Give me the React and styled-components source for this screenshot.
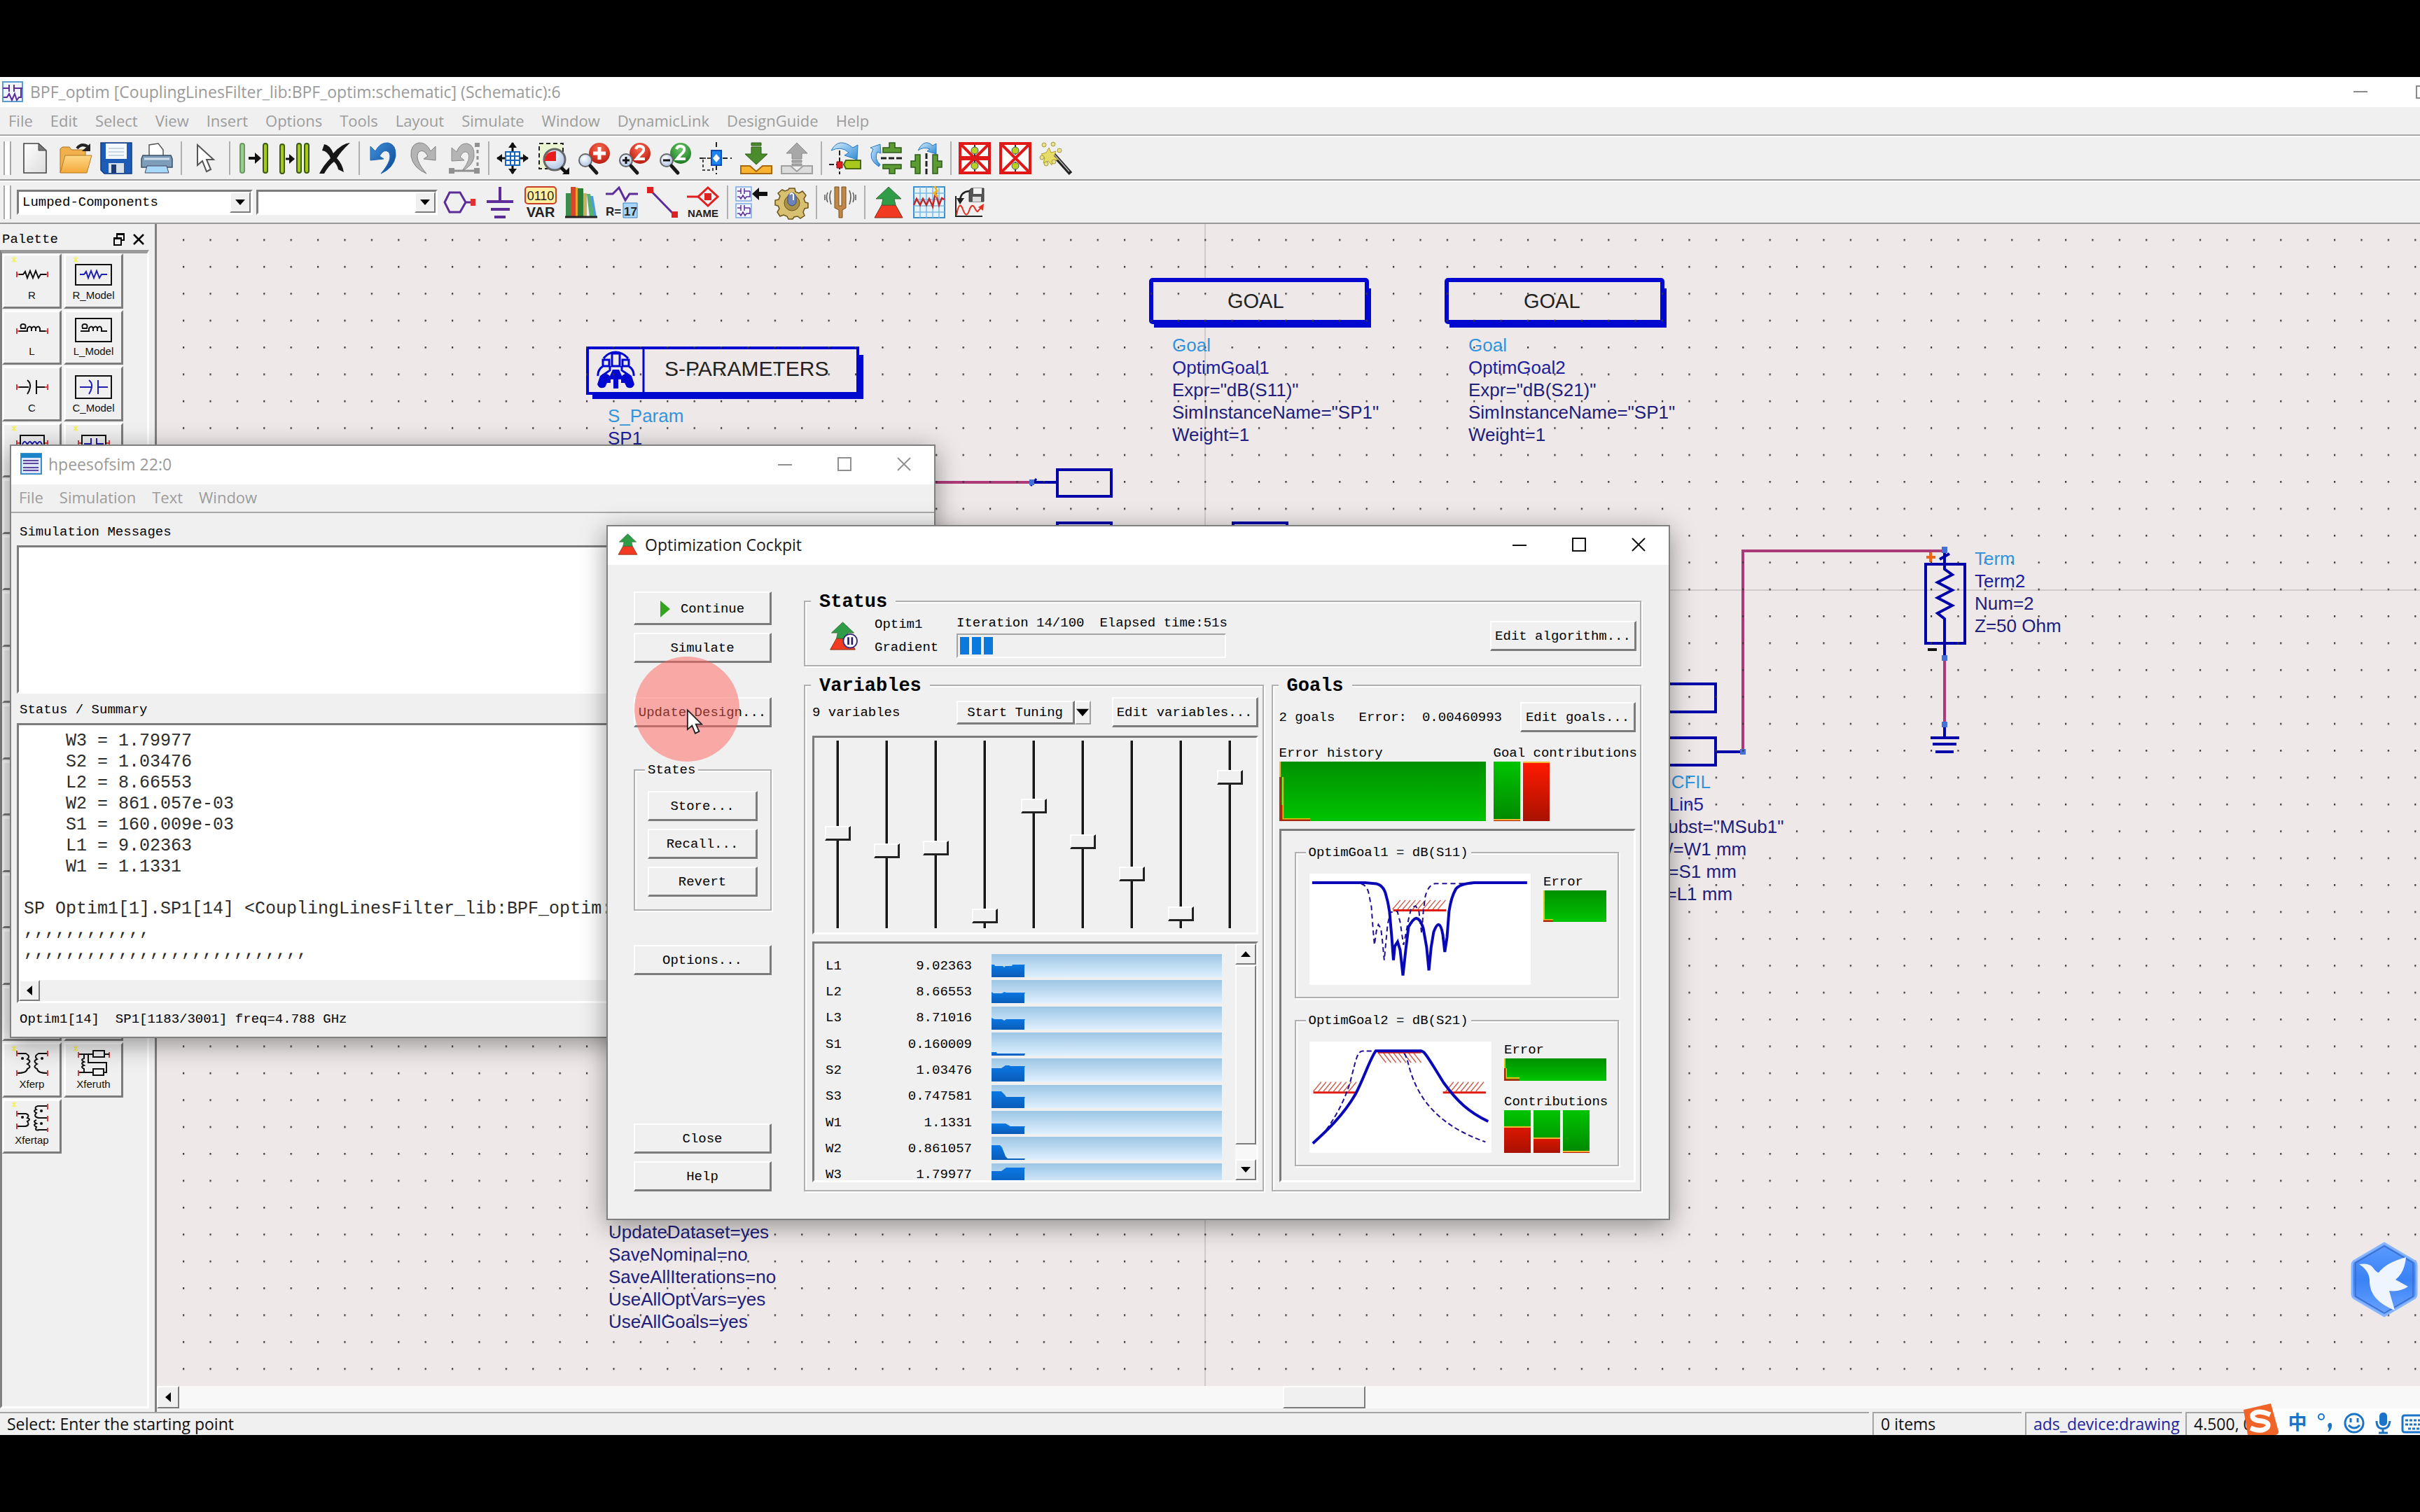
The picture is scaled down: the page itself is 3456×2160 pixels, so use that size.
import React from "react";
import styled, { createGlobalStyle, css } from "styled-components";

const ui = `"Open Sans", "Noto Sans", sans-serif`;
const mono = `"Liberation Mono", monospace`;
const arial = `"Liberation Sans", Arial, sans-serif`;
const face = "#f0f0f0";
const dark = "#7c7c7c";

const Global = createGlobalStyle`
  *, *::before, *::after { box-sizing: border-box; }
  body { margin: 0; background: #000; }
  button, select, input { font: inherit; color: inherit; margin: 0; }
`;

/* ---------- shell ---------- */
const Page = styled.div`
  height: 100vh;
  padding: 110px 0;
  display: flex;
  flex-direction: column;
  background: #000;
  overflow: hidden;
`;
const AppWindow = styled.div`
  position: relative;
  flex: 1;
  min-height: 0;
  display: flex;
  flex-direction: column;
  background: ${face};
  font-family: ${ui};
  font-size: 22px;
  overflow: hidden;
`;
const MainTitle = styled.header`
  height: 43px;
  display: flex;
  align-items: center;
  gap: 10px;
  padding: 0 0 2px 3px;
  background: #fff;
  color: #9a9a9a;
`;
const TitleText = styled.span`
  flex: 1;
  font-size: ${(p) => p.$size || 22}px;
  line-height: 32px;
  white-space: nowrap;
`;
const WinButtons = styled.div`
  display: flex;
  gap: ${(p) => p.$gap || 40}px;
  color: ${(p) => p.$color || "#8a8a8a"};
`;
const WinButton = styled.button`
  width: 44px;
  height: 40px;
  padding: 0;
  border: 0;
  background: none;
  display: grid;
  place-items: center;
`;
const MenuBar = styled.nav`
  height: 41px;
  display: flex;
  align-items: center;
  gap: ${(p) => p.$gap}px;
  padding: 0 0 ${(p) => p.$lift}px ${(p) => p.$pad}px;
  color: #9c9c9c;
  background: ${face};
  border-bottom: 2px solid #a8a8a8;
`;
const MenuItem = styled.button`
  padding: 0;
  border: 0;
  background: none;
  font-size: 22px;
  line-height: 30px;
`;
const Toolbar = styled.div`
  height: ${(p) => p.$h}px;
  display: flex;
  align-items: center;
  border-top: 2px solid #fff;
  border-bottom: 2px solid #9a9a9a;
`;
const Grip = styled.span`
  width: 11px;
  height: 48px;
  margin: 0 ${(p) => p.$after}px 0 5px;
  border: solid #a8a8a8;
  border-width: 0 2px;
  background: #fff;
`;
const ToolSep = styled.span`
  width: 11px;
  display: flex;
  justify-content: center;
  &::before {
    content: "";
    width: 2px;
    height: 48px;
    background: #b0b0b0;
  }
`;
const ToolButton = styled.button`
  width: 58px;
  height: 52px;
  padding: 0;
  border: 0;
  background: none;
  display: grid;
  place-items: center;
`;
const Combo = styled.div`
  display: flex;
  width: ${(p) => p.$w}px;
  height: 36px;
  margin-right: ${(p) => p.$after}px;
  background: #fff;
  border: 3px solid;
  border-color: #7c7c7c #fff #fff #7c7c7c;
`;
const ComboSelect = styled.select`
  flex: 1;
  min-width: 0;
  padding: 0 0 0 5px;
  border: 0;
  appearance: none;
  background: transparent;
  color: #000;
  font: 19px/28px ${mono};
`;
const bevel = css`
  background: ${face};
  border: 2px solid;
  border-color: #fff ${dark} ${dark} #fff;
`;
const ComboArrow = styled.span`
  ${bevel}
  width: 30px;
  display: grid;
  place-items: center;
`;
const Main = styled.main`
  flex: 1;
  min-height: 0;
  display: flex;
`;

/* ---------- palette ---------- */
const PaletteDock = styled.aside`
  width: 224px;
  display: flex;
  flex-direction: column;
  border-right: 3px solid #808080;
`;
const PaletteHead = styled.div`
  height: 37px;
  display: flex;
  align-items: center;
  gap: 12px;
  padding: 6px 15px 0 3px;
  font: 19px/24px ${mono};
`;
const PaletteName = styled.span`
  flex: 1;
`;
const TinyButton = styled.button`
  width: 16px;
  height: 20px;
  padding: 0;
  border: 0;
  background: none;
`;
const PaletteBody = styled.div`
  flex: 1;
  width: 213px;
  margin-bottom: 5px;
  border: solid;
  border-width: 5px 3px 3px;
  border-color: #9a9a9a #fff #fff #808080;
`;
const PaletteGrid = styled.div`
  display: grid;
  grid-template-columns: 85px 85px;
  grid-template-rows: repeat(16, 1fr);
  gap: 2px 3px;
  height: 1286px;
`;
const PaletteButton = styled.button`
  background: ${face};
  border: 3px solid;
  border-color: #fff ${dark} ${dark} #fff;
  padding: 0 0 7px;
  display: flex;
  flex-direction: column;
  align-items: center;
  justify-content: flex-end;
  font: 15px/18px ${arial};
  color: #111;
  overflow: hidden;
`;

/* ---------- canvas ---------- */
const CanvasColumn = styled.section`
  flex: 1;
  min-width: 0;
  display: flex;
  flex-direction: column;
`;
const Canvas = styled.div`
  position: relative;
  flex: 1;
  min-height: 0;
  overflow: hidden;
  background: #eee9e8;
`;
const CanvasDrawing = styled.svg`
  display: block;
  width: 100%;
  height: 100%;
`;
const Label = styled.div`
  position: absolute;
  left: ${(p) => p.$x - 224}px;
  top: ${(p) => p.$y - 320}px;
  font: ${(p) => p.$size || 26}px/32px ${arial};
  color: ${(p) => p.$color || "#20207c"};
  white-space: pre;
`;
const Kind = styled.div`
  color: #3394dc;
`;
const Name = styled.div`
  color: #20209c;
`;
const HScroll = styled.div`
  height: 37px;
  padding-bottom: 5px;
  display: flex;
  background: ${face};
`;
const HTrack = styled.div`
  flex: 1;
  display: grid;
  grid-template-columns: 1577fr 118px 1506fr;
  background: #f8f8f8;
`;
const HThumb = styled.span`
  ${bevel}
  grid-column: 2;
`;
const ScrollButton = styled.button`
  ${bevel}
  width: ${(p) => p.$w || 30}px;
  height: ${(p) => p.$h || 30}px;
  padding: 0;
  display: grid;
  place-items: center;
`;

/* ---------- status bar ---------- */
const StatusBar = styled.footer`
  height: 33px;
  display: flex;
  gap: 5px;
  background: ${face};
`;
const StatusCell = styled.div`
  ${(p) => (p.$w ? `width: ${p.$w}px;` : "flex: 1;")}
  border: solid #a4a4a4;
  border-width: 2px 0 0 ${(p) => (p.$w ? 2 : 0)}px;
  padding-left: 10px;
  line-height: 30px;
  white-space: nowrap;
  color: ${(p) => p.$color || "#111"};
  font-size: 23px;
`;
const ImeBar = styled.div`
  position: absolute;
  right: 0;
  bottom: 0;
  width: 254px;
  height: 46px;
`;
const Bird = styled.div`
  position: absolute;
  right: 3px;
  top: 1664px;
  width: 96px;
  height: 108px;
`;

/* ---------- windows ---------- */
const FloatingWindow = styled.section`
  position: absolute;
  left: ${(p) => p.$x}px;
  top: ${(p) => p.$y}px;
  width: ${(p) => p.$w}px;
  display: flex;
  flex-direction: column;
  background: ${face};
  border: 2px solid #808080;
  box-shadow: 0 8px 34px rgba(0, 0, 0, 0.4);
`;
const WindowTitle = styled.header`
  height: 55px;
  display: flex;
  align-items: center;
  gap: 9px;
  padding: 0 21px 4px 13px;
  background: #fff;
  color: ${(p) => p.$color};
`;
const SimBody = styled.div`
  display: flex;
  flex-direction: column;
  padding: 15px 8px 13px;
  font: 19px/24px ${mono};
  color: #000;
`;
const SimLabel = styled.div`
  padding: 0 4px 7px;
`;
const sunken = css`
  border: 3px solid;
  border-color: #7c7c7c #fff #fff #7c7c7c;
`;
const Messages = styled.div`
  ${sunken}
  height: 212px;
  margin-bottom: 11px;
  background: #fff;
`;
const Summary = styled.div`
  ${sunken}
  height: 400px;
  margin-bottom: 11px;
  background: #fff;
  display: flex;
  flex-direction: column;
  justify-content: space-between;
`;
const Log = styled.pre`
  margin: 0;
  padding: 8px 0 0 7px;
  font: 25px/30px ${mono};
  color: #2c2c2c;
  overflow: hidden;
`;
const LogScroll = styled.div`
  display: flex;
  gap: 3px;
  background: ${face};
`;
const SimStatus = styled.div`
  padding: 0 4px;
  white-space: pre;
`;

/* ---------- cockpit ---------- */
const CockpitBody = styled.div`
  display: grid;
  grid-template-columns: 197px 1fr;
  column-gap: 46px;
  padding: 36px 39px 39px 37px;
  font: 19px/24px ${mono};
  color: #000;
`;
const Side = styled.div`
  display: flex;
  flex-direction: column;
  gap: 49px;
  padding-top: 2px;
`;
const Stack = styled.div`
  display: flex;
  flex-direction: column;
  gap: 11px;
  ${(p) => p.$end && "margin-top: auto;"}
`;
const PushButton = styled.button`
  background: ${face};
  border: solid;
  border-width: 2px 3px 3px 2px;
  border-color: #fff ${dark} ${dark} #fff;
  height: ${(p) => p.$h || 43}px;
  ${(p) => p.$w && `width: ${p.$w}px;`}
  padding: 2px 0 0;
  display: flex;
  align-items: center;
  justify-content: center;
  gap: 15px;
  white-space: nowrap;
`;
const Group = styled.fieldset`
  min-width: 0;
  margin: 0;
  padding: ${(p) => p.$pad};
  border: 2px solid #b0b0b0;
  box-shadow: 2px 2px 0 #fff, inset 2px 2px 0 #fff;
`;
const GroupTitle = styled.legend`
  margin-left: ${(p) => p.$x}px;
  padding: ${(p) => (p.$big ? "3px 12px 0" : "0 4px")};
  background: ${face};
  font: ${(p) => (p.$big ? `bold 27px/29px ${mono}` : `19px/24px ${mono}`)};
`;
const Panes = styled.div`
  display: flex;
  flex-direction: column;
  gap: 11px;
`;
const StatusRow = styled.div`
  display: flex;
  align-items: center;
  height: 67px;
`;
const AlgoText = styled.div`
  width: 117px;
  margin-left: 25px;
  line-height: 33px;
`;
const ProgressBlock = styled.div`
  width: 385px;
  display: flex;
  flex-direction: column;
  gap: 3px;
`;
const ProgressText = styled.div`
  display: flex;
  gap: 22px;
  white-space: nowrap;
`;
const ProgressTrack = styled.div`
  height: 35px;
  display: flex;
  gap: 4px;
  padding: 3px;
  border: 2px solid;
  border-color: #a4a4a4 #fff #fff #a4a4a4;
`;
const Chunk = styled.span`
  width: 13px;
  background: #0a78dc;
`;
const Push = styled.div`
  margin-left: auto;
`;
const Columns = styled.div`
  display: grid;
  grid-template-columns: 656fr 528fr;
  gap: 11px;
`;
const Row = styled.div`
  display: flex;
  align-items: center;
  white-space: nowrap;
`;
const Grow = styled.span`
  flex: 1;
`;
const TuneSplit = styled.div`
  display: flex;
  width: 192px;
  margin-right: 30px;
`;
const TuneArrow = styled.button`
  width: 23px;
  padding: 0;
  background: ${face};
  border: 2px solid;
  border-color: #fff #a0a0a0 #a0a0a0 #fff;
  display: grid;
  place-items: center;
`;
const Sliders = styled.div`
  ${sunken}
  display: flex;
  justify-content: space-between;
  height: 284px;
  margin: 12px 0 10px;
  padding: 4px 19px 6px 15px;
`;
const Slider = styled.input`
  appearance: none;
  writing-mode: vertical-lr;
  direction: rtl;
  width: 37px;
  height: 268px;
  background: linear-gradient(90deg, #8a8a8a 0 1px, #161616 1px 4px, #fff 4px) center / 5px 100% no-repeat;
  &::-webkit-slider-runnable-track {
    width: 37px;
    background: transparent;
  }
  &::-webkit-slider-thumb {
    appearance: none;
    width: 37px;
    height: 21px;
    background: ${face};
    border: solid;
    border-width: 2px 3px 3px 2px;
    border-color: #fff #222 #222 #fff;
  }
`;
const VarPanel = styled.div`
  ${sunken}
  height: 344px;
  display: flex;
  align-items: flex-start;
  overflow: hidden;
`;
const VarTable = styled.table`
  height: 336px;
  margin-top: 13px;
  border-collapse: collapse;
  td, th {
    padding: 0;
    font-weight: normal;
  }
`;
const VarName = styled.th`
  width: 100px;
  text-align: left;
  && { padding-left: 16px; }
`;
const VarValue = styled.td`
  width: 125px;
  text-align: right;
`;
const VarChart = styled.td`
  width: 357px;
  && { padding-left: 28px; }
  line-height: 0;
`;
const VScroll = styled.div`
  width: 30px;
  height: 338px;
  margin-left: auto;
  display: flex;
  flex-direction: column;
  justify-content: space-between;
  background: #f8f8f8;
`;
const VThumb = styled.span`
  ${bevel}
  height: 256px;
  margin-bottom: 20px;
`;
const Caption = styled.div`
  white-space: nowrap;
  line-height: 24px;
`;
const GoalHead = styled(Row)`
  gap: 22px;
  margin-bottom: 18px;
`;
const GoalCount = styled.span`
  width: 92px;
`;
const GoalCharts = styled.div`
  display: grid;
  grid-template-columns: 295px 1fr;
  column-gap: 11px;
  margin-bottom: 11px;
`;
const Bars = styled.div`
  display: flex;
  gap: 4px;
`;
const GoalPanel = styled.div`
  ${sunken}
  height: 505px;
  display: flex;
  flex-direction: column;
  gap: 20px;
  padding: 19px 21px 0 19px;
`;
const GoalRow = styled.div`
  display: grid;
  grid-template-columns: 1fr ${(p) => p.$side}px;
  column-gap: 18px;
`;
const Plot = styled.svg`
  display: block;
  width: 100%;
  height: 159px;
  background: #fff;
`;
const Block = styled.svg`
  display: block;
`;
const GoalSide = styled.div`
  display: flex;
  flex-direction: column;
  justify-content: space-between;
`;
const ClickHalo = styled.div`
  position: absolute;
  left: 906px;
  top: 828px;
  width: 150px;
  height: 150px;
  border-radius: 50%;
  background: rgba(255, 98, 90, 0.5);
  pointer-events: none;
`;
const Pointer = styled.svg`
  position: absolute;
  left: 980px;
  top: 902px;
  pointer-events: none;
`;

/* ---------- icons ---------- */
const IconSvg = styled.svg`
  overflow: visible;
`;
const Glyph = ({ children, w = 46, h = 46, box }) => (
  <IconSvg width={w} height={h} viewBox={box || `0 0 ${w} ${h}`} fill="none" aria-hidden="true">
    {children}
  </IconSvg>
);
const Tri = ({ dir = "down", s = 14 }) => (
  <svg width={s} height={s} viewBox="0 0 14 14" aria-hidden="true">
    <path d={{ down: "M0 3h14L7 11z", up: "M0 11h14L7 3z", left: "M11 0v14L3 7z" }[dir]} fill="#000" />
  </svg>
);
const HiddenDefs = styled.svg`
  position: absolute;
`;
const Defs = () => (
  <HiddenDefs width="0" height="0" aria-hidden="true">
    <defs>
      <linearGradient id="gUp" x1="0" y1="0" x2="0" y2="1"><stop offset="0" stopColor="#009000" /><stop offset="1" stopColor="#00c400" /></linearGradient>
      <linearGradient id="gDown" x1="0" y1="0" x2="0" y2="1"><stop offset="0" stopColor="#00c400" /><stop offset="1" stopColor="#008800" /></linearGradient>
      <linearGradient id="rDown" x1="0" y1="0" x2="0" y2="1"><stop offset="0" stopColor="#ff1a00" /><stop offset="1" stopColor="#a81200" /></linearGradient>
      <linearGradient id="rDeep" x1="0" y1="0" x2="0" y2="1"><stop offset="0" stopColor="#dc1600" /><stop offset="1" stopColor="#a81200" /></linearGradient>
      <linearGradient id="sky" x1="0" y1="0" x2="0" y2="1"><stop offset="0" stopColor="#9cc6e4" /><stop offset="1" stopColor="#e0f0ff" /></linearGradient>
      <linearGradient id="bar" x1="0" y1="0" x2="0" y2="1"><stop offset="0" stopColor="#0a78e4" /><stop offset="1" stopColor="#0a5cb8" /></linearGradient>
      <linearGradient id="blueArrow" x1="0" y1="0" x2="1" y2="1"><stop offset="0" stopColor="#3f8fdc" /><stop offset="1" stopColor="#0c4690" /></linearGradient>
      <linearGradient id="lightArrow" x1="0" y1="0" x2="1" y2="1"><stop offset="0" stopColor="#d4ecfc" /><stop offset="1" stopColor="#2f8ad4" /></linearGradient>
      <linearGradient id="paper" x1="0" y1="0" x2="1" y2="1"><stop offset="0" stopColor="#fff" /><stop offset="1" stopColor="#dcdcdc" /></linearGradient>
      <linearGradient id="folder" x1="0" y1="0" x2="0" y2="1"><stop offset="0" stopColor="#ffd889" /><stop offset="1" stopColor="#f3a93a" /></linearGradient>
      <linearGradient id="bird" x1="0" y1="0" x2="0" y2="1"><stop offset="0" stopColor="#5d9bff" /><stop offset=".5" stopColor="#3a82f6" /><stop offset="1" stopColor="#6ba4ff" /></linearGradient>
      <radialGradient id="redBall" cx=".5" cy=".3" r=".7"><stop offset="0" stopColor="#ff6a50" /><stop offset="1" stopColor="#b81c10" /></radialGradient>
      <radialGradient id="greenBall" cx=".5" cy=".3" r=".7"><stop offset="0" stopColor="#6cc868" /><stop offset="1" stopColor="#1c7a24" /></radialGradient>
      <radialGradient id="lens" cx=".4" cy=".35" r=".7"><stop offset="0" stopColor="#fff" /><stop offset="1" stopColor="#a8c0e4" /></radialGradient>
    </defs>
  </HiddenDefs>
);

const Tree = ({ w = 46, h = 46, pause }) => (
  <Glyph w={w} h={h} box="0 0 46 46">
    <path d="M13 27h20l10 18H3z" fill="#f23a22" stroke="#7a2a10" />
    <path d="M23 1 41 18H31l2 9H13l2-9H5z" fill="#2f9c48" stroke="#3c6a3a" />
    {pause && (
      <g>
        <circle cx="35" cy="31" r="11" fill="#fff" stroke="#3a2a78" strokeWidth="2" />
        <path d="M32 25v12M38 25v12" stroke="#2a1a68" strokeWidth="3" />
      </g>
    )}
  </Glyph>
);
const Pin = ({ x, y = 0, pale }) => (
  <rect x={x} y={2 + y} width="6" height="42" rx="3" fill={pale ? "#9ccc94" : "#a8c81c"} stroke={pale ? "#6a9a62" : "#3a5a10"} strokeWidth="2" />
);
const Mag = ({ minus, plus, two, ball }) => (
  <Glyph>
    <circle cx="31" cy="16" r="15" fill={`url(#${ball})`} />
    {two ? (
      <path d="M25 10q2-5 7-4 5 1 4 6-1 3-5 6l-5 6h12" stroke="#fff" strokeWidth="4" />
    ) : (
      <path d="M31 7v18M22 16h18" stroke="#fff" strokeWidth="5" />
    )}
    <circle cx="11" cy="26" r="9" fill="url(#lens)" stroke="#666" strokeWidth="2" />
    {minus && <path d="M6 26h10" stroke="#111" strokeWidth="3" />}
    {plus && <path d="M6 26h10M11 21v10" stroke="#111" strokeWidth="3" />}
    <path d="m18 34 9 10" stroke="#1a1a1a" strokeWidth="5" strokeLinecap="round" />
  </Glyph>
);

const icons = {
  new: (
    <Glyph>
      <path d="M7 2h21l11 10v32H7z" fill="url(#paper)" stroke="#444" strokeWidth="1.6" />
      <path d="M28 2v10h11z" fill="#777" stroke="#444" />
    </Glyph>
  ),
  open: (
    <Glyph>
      <path d="M1 44V10l3-3h10l3 4h20v8" fill="#f0b04e" stroke="#a8701c" />
      <path d="M8 19h38l-7 25H1z" fill="url(#folder)" stroke="#b87a24" />
      <path d="M25 9q6-8 15-3" stroke="#222" strokeWidth="4" />
      <path d="M44 2v11H32z" fill="#222" />
    </Glyph>
  ),
  save: (
    <Glyph>
      <path d="M1 1h44v44H6l-5-5z" fill="#1c5cb8" stroke="#123c80" strokeWidth="1.5" />
      <path d="M8 2h30v22H8z" fill="#f4f8ff" />
      <path d="M12 9h22M12 14h22M12 19h22" stroke="#bcd" strokeWidth="1.5" />
      <path d="M12 30h22v14H12z" fill="#d8e0e8" />
      <path d="M16 32h7v12h-7z" fill="#1a3c78" />
    </Glyph>
  ),
  print: (
    <Glyph>
      <path d="M12 20V4l13-2 7 9v9z" fill="#fff" stroke="#555" strokeWidth="1.5" />
      <path d="M3 19h40l2 5v12H1V24z" fill="#7c9cb8" stroke="#3a5068" strokeWidth="1.5" />
      <path d="M5 24h36" stroke="#d0e0f0" strokeWidth="3" />
      <path d="M9 34h28l3 10H6z" fill="#a8d8f8" stroke="#446" />
    </Glyph>
  ),
  cursor: (
    <Glyph>
      <path d="M12 4v29l7-6 6 15 6-3-6-14h10z" fill="#fff" stroke="#555" strokeWidth="2" />
    </Glyph>
  ),
  wireA: (
    <Glyph>
      <Pin x={4} pale />
      <Pin x={37} />
      <path d="M16 23h12" stroke="#111" strokeWidth="4" />
      <path d="m25 15 9 8-9 8z" fill="#111" />
    </Glyph>
  ),
  wireB: (
    <Glyph>
      <Pin x={3} y={1} />
      <Pin x={27} />
      <Pin x={38} />
      <path d="M11 24h6" stroke="#111" strokeWidth="3" />
      <path d="m16 17 8 7-8 7z" fill="#111" />
    </Glyph>
  ),
  del: (
    <Glyph>
      <path d="M8 3q8 1 13 13Q33 2 45 1 32 13 26 23q8 8 10 20l-8-4q-1-6-6-11-8 6-14 17H1q6-12 16-22Q13 13 5 12z" fill="#161616" />
    </Glyph>
  ),
  undo: (
    <Glyph>
      <path d="M5 6v20l19-2-6-4q6-11 13-6 7 10-11 31Q38 37 41 20 42 3 30 1 19 0 12 13z" fill="url(#blueArrow)" stroke="#1c64b4" />
    </Glyph>
  ),
  redo: (
    <Glyph>
      <path d="M40 6v20l-17-2 6-4q-6-11-13-6-7 10 11 31Q8 37 5 20 4 3 16 1q11-1 17 12z" fill="#b4b4b4" stroke="#808080" />
    </Glyph>
  ),
  undo3: (
    <Glyph>
      <path d="M5 8v19l18-1-6-5q5-10 11-6 6 8-8 26 15-7 17-20Q38 4 27 2 17 1 12 14z" fill="#b4b4b4" stroke="#8a8a8a" />
      <path d="M42 2v36" stroke="#909090" strokeWidth="3" strokeDasharray="5 4" />
      <path d="M4 41h38" stroke="#909090" strokeWidth="3" />
      <path d="M1 37h8v8H1zM37 37h8v8h-8zM38 1h7v6h-7z" fill="#909090" />
    </Glyph>
  ),
  pan: (
    <Glyph>
      <path d="M23 1v44M1 23h44" stroke="#111" strokeWidth="3" />
      <path d="m23 0 6 8H17zM23 46l6-8H17zM0 23l8-6v12zM46 23l-8-6v12z" fill="#111" />
      <path d="M13 14h20v19H13z" fill="#fff" stroke="#1464c0" strokeWidth="2" />
      <path d="M13 20h20M13 26h20M20 14v19M26 14v19" stroke="#1464c0" strokeWidth="2" />
    </Glyph>
  ),
  zoomArea: (
    <Glyph>
      <path d="M3 2h34v36H3z" fill="#eaf4d0" stroke="#222" strokeWidth="2" strokeDasharray="6 4" />
      <circle cx="25" cy="25" r="15" fill="url(#lens)" stroke="#666" strokeWidth="3" />
      <path d="M11 27q0-14 16-14v14z" fill="#e81c1c" />
      <path d="m34 36 8 8" stroke="#111" strokeWidth="5" />
      <path d="M46 36v10H36z" fill="#111" />
    </Glyph>
  ),
  zoomIn: <Mag ball="redBall" />,
  zoomIn2: <Mag ball="redBall" two plus />,
  zoomOut2: <Mag ball="greenBall" two minus />,
  center: (
    <Glyph>
      <path d="M24 0v46M0 23h46" stroke="#222" strokeWidth="2" strokeDasharray="7 4" />
      <path d="M5 23h14v17H5z" stroke="#444" strokeWidth="2" strokeDasharray="4 3" />
      <path d="M17 12h14v21H17z" fill="#1c84f0" stroke="#0c4cb0" strokeWidth="2" />
      <path d="m24 17 5 6-5 6-5-6z" fill="#fff" />
    </Glyph>
  ),
  pushDown: (
    <Glyph>
      <path d="M16 1h14v4H16zM16 7h14v10h9L23 32 7 17h9z" fill="#4a8c2c" stroke="#2c5c18" />
      <path d="M1 34h13l9 8 9-8h13v11H1z" fill="#f8b430" stroke="#a86a10" strokeWidth="2" />
    </Glyph>
  ),
  popUp: (
    <Glyph>
      <path d="M23 1 38 16h-8v8H16v-8H8zM16 26h14v3H16zM16 31h14v3H16z" fill="#a8a8a8" stroke="#8a8a8a" />
      <path d="M1 34h13l9 8 9-8h13v11H1z" fill="#dcdcdc" stroke="#a0a0a0" strokeWidth="2" />
    </Glyph>
  ),
  rotate: (
    <Glyph>
      <path d="M3 12Q14-8 34 8l7-4-1 21-18-6 6-4Q18 5 3 12z" fill="url(#lightArrow)" stroke="#2a78c0" />
      <path d="M15 12v34M0 32h22" stroke="#222" strokeWidth="2" strokeDasharray="7 3" />
      <path d="M11 28h8v9h-8z" fill="#e02020" stroke="#801010" />
      <path d="M24 26h21v12H24l-3-6z" fill="#a8c81c" stroke="#4a6a10" strokeWidth="2" />
    </Glyph>
  ),
  mirrorX: (
    <Glyph>
      <path d="M13 35Q-4 24 5 10L1 8l14-5 1 13-5-2q-5 10 4 18z" fill="url(#lightArrow)" stroke="#2a78c0" />
      <path d="M16 23h30" stroke="#222" strokeWidth="3" strokeDasharray="8 3" />
      <path d="M28 1h8v7h9v7H19V8h9zM28 45h8v-7h9v-6H19v6h9z" fill="#5c9a34" stroke="#2c5c18" strokeWidth="1.5" />
    </Glyph>
  ),
  mirrorY: (
    <Glyph>
      <path d="M11 12Q20-6 32 5l5-3v15l-13-4 4-3q-9-4-17 2z" fill="url(#lightArrow)" stroke="#2a78c0" />
      <path d="M23 16v30" stroke="#222" strokeWidth="3" strokeDasharray="8 3" />
      <path d="M1 27h6v-9h7v27H7v-9H1zM45 27h-6v-9h-7v27h7v-9h6z" fill="#5c9a34" stroke="#2c5c18" strokeWidth="1.5" />
    </Glyph>
  ),
  deact: (
    <Glyph>
      <path d="M2 2h42v42H2z" fill="#fff" stroke="#e01818" strokeWidth="4" />
      <path d="m4 4 38 38M42 4 4 42" stroke="#e01818" strokeWidth="4" />
      <path d="M23 4v38" stroke="#333" strokeWidth="2" />
      <circle cx="23" cy="12" r="5" fill="#b8d020" stroke="#456" /><circle cx="23" cy="34" r="5" fill="#b8d020" stroke="#456" />
      <path d="M3 23h40" stroke="#e01818" strokeWidth="6" />
    </Glyph>
  ),
  short: (
    <Glyph>
      <path d="M2 2h42v42H2z" fill="#fff" stroke="#e01818" strokeWidth="4" />
      <path d="m4 4 38 38M42 4 4 42" stroke="#e01818" strokeWidth="4" />
      <path d="M23 4v14M23 28v14" stroke="#333" strokeWidth="2" />
      <circle cx="23" cy="12" r="5" fill="#b8d020" stroke="#456" /><circle cx="23" cy="34" r="5" fill="#b8d020" stroke="#456" />
    </Glyph>
  ),
  wand: (
    <Glyph>
      <path d="m19 17 25 28" stroke="#222" strokeWidth="6" />
      <path d="m20 17 22 25" stroke="#bbb" strokeWidth="1.5" />
      <path d="m13 8 3 7 7-2-3 7 6 5-8 1-1 7-5-6-7 3 2-8-5-5 7-2z" fill="#e8dc68" stroke="#b0a030" />
      <g fill="#e8e08c" stroke="#a89c38"><circle cx="6" cy="4" r="3" /><circle cx="19" cy="3" r="3" /><circle cx="28" cy="12" r="3" /><circle cx="3" cy="22" r="3" /><circle cx="9" cy="31" r="3" /><circle cx="20" cy="28" r="3" /></g>
    </Glyph>
  ),
  port: (
    <Glyph>
      <path d="m9 9 15 0 8 14-8 14H9L2 23z" stroke="#5c2c98" strokeWidth="3" />
      <path d="M32 23h7" stroke="#5c2c98" strokeWidth="3" />
      <path d="M39 18h7v10h-7z" fill="#e03030" />
    </Glyph>
  ),
  gnd: (
    <Glyph>
      <path d="M23 1v20M4 22h38M10 33h27M15 44h16" stroke="#5c2c98" strokeWidth="4" />
    </Glyph>
  ),
  vars: (
    <Glyph>
      <rect x="1" y="1" width="44" height="24" rx="4" fill="#fff0a0" stroke="#c83c28" strokeWidth="2" />
      <text x="23" y="20" textAnchor="middle" fontFamily="Liberation Sans" fontSize="18" fill="#222">0110</text>
      <text x="23" y="44" textAnchor="middle" fontFamily="Liberation Sans" fontWeight="bold" fontSize="20" fill="#222">VAR</text>
    </Glyph>
  ),
  books: (
    <Glyph>
      <path d="M1 10h7v34H1z" fill="#3c8c50" /><path d="M8 1h7v43H8z" fill="#d84828" /><path d="M15 2h3v42h-3z" fill="#f0a030" />
      <path d="M18 3h8v41h-8z" fill="#2c7c34" /><path d="M26 10h5v34h-5z" fill="#c8b060" /><path d="m31 11 5 0 7 33h-8z" fill="#58b070" /><path d="m36 14 4 0 5 30h-3z" fill="#4c9ce0" />
      <path d="M0 44h46" stroke="#222" strokeWidth="3" />
    </Glyph>
  ),
  r17: (
    <Glyph>
      <path d="M0 11h10l9-9 9 18 6-9h12" stroke="#5c2c98" strokeWidth="3" />
      <path d="M25 24h20v21H25z" fill="#a8d4f8" stroke="#3c80c0" />
      <text x="0" y="42" fontFamily="Liberation Sans" fontWeight="bold" fontSize="17" fill="#222">R=</text>
      <text x="26" y="42" fontFamily="Liberation Sans" fontWeight="bold" fontSize="17" fill="#222">17</text>
    </Glyph>
  ),
  wire: (
    <Glyph>
      <path d="m6 6 34 35" stroke="#5c2c98" strokeWidth="3" />
      <path d="M1 1h9v9H1zM36 36h9v9h-9z" fill="#e02020" />
    </Glyph>
  ),
  name: (
    <Glyph>
      <path d="M0 15h16" stroke="#e02020" strokeWidth="3" />
      <path d="m30 2 14 13-14 13-14-13z" stroke="#e02020" strokeWidth="3" /><path d="M25 10h10v10H25z" fill="#e02020" />
      <text x="23" y="44" textAnchor="middle" fontFamily="Liberation Sans" fontWeight="bold" fontSize="15" fill="#222">NAME</text>
    </Glyph>
  ),
  hier: (
    <Glyph>
      {[1, 25].map((y) => (
        <g key={y}>
          <path d={`M1 ${y}h22v20H1z`} fill="#f0f4ff" stroke="#7ca8e0" strokeWidth="1.5" />
          <path d={`M3 ${y + 6}h5v-4v8M13 ${y + 2}v8m0-4h8M3 ${y + 14}h3l2 3 3-5 3 5 2-3h5v-8`} stroke="#5c2c98" strokeWidth="1.5" />
        </g>
      ))}
      <path d="M24 11 34 2v6h12v6H34v6z" fill="#111" />
    </Glyph>
  ),
  gear: (
    <Glyph>
      <path d="m19 3 8 0 1 5 5 2 5-3 5 6-3 5 2 5 4 1v7l-5 1-2 5 2 5-6 4-4-3-5 1-2 3h-6l-2-4-5-2-5 2-4-6 3-5-2-4-4-1v-7l5-1 2-5-3-4 6-5 4 2 5-2z" fill="#d8c070" stroke="#6a5418" strokeWidth="1.5" />
      <circle cx="23" cy="24" r="11" fill="#a89048" stroke="#6a5418" />
      <path d="M17 14q6-10 12 0v10q-6 8-12 0z" fill="#6c84b8" stroke="#3a4a78" /><path d="M20 12q3-4 5 0v8" stroke="#fff" strokeWidth="2" />
    </Glyph>
  ),
  fork: (
    <Glyph>
      <path d="M15 1h6v27h4V1h6v30l-5 3v11h-5V34l-6-3z" fill="#c08848" stroke="#7a4c18" />
      <path d="M10 6q-4 9 0 20M5 9q-3 7 0 14M1 12v8M36 6q4 9 0 20M41 9q3 7 0 14M45 12v8" stroke="#555" strokeWidth="1.5" />
    </Glyph>
  ),
  tree: <Tree />,
  chart: (
    <Glyph>
      <path d="M1 1h44v44H1z" fill="#e4f2fc" stroke="#3c90cc" strokeWidth="2" />
      <path d="M10 1v44M19 1v44M28 1v44M37 1v44M1 10h44M1 19h44M1 28h44M1 37h44" stroke="#7cb8e0" strokeWidth="1.5" />
      <path d="m1 27 4-9 5 9 4-9 5 9 4-9 5 11 4-20 5 18 4-10 4 2" stroke="#c02828" strokeWidth="2.5" />
      <path d="m31 0 3 7-4 3 5 5" stroke="#f0b020" strokeWidth="3" />
    </Glyph>
  ),
  saveGraph: (
    <Glyph>
      <path d="M25 3h18v19H22V6z" fill="#555" stroke="#333" /><path d="M28 3h12v8H28z" fill="#f4f4f4" /><path d="M27 15h12v7H27z" fill="#ddd" />
      <path d="M22 7Q10 8 9 20" stroke="#222" strokeWidth="2.5" /><path d="M4 17h11l-6 9z" fill="#222" />
      <path d="M3 14v29h38" stroke="#222" strokeWidth="2" />
      <path d="M4 41q4-22 9-8t9 2 8-4 5 4l6-6" stroke="#e03020" strokeWidth="2" /><path d="m43 25-1 10-7-5z" fill="#e03020" />
    </Glyph>
  ),
};

const toolbarOne = ["new", "open", "save", "print", "|", "cursor", "|", "wireA", "wireB", "del", "|", "undo", "redo", "undo3", "|", "pan", "zoomArea", "zoomIn", "zoomIn2", "zoomOut2", "center", "pushDown", "popUp", "|", "rotate", "mirrorX", "mirrorY", "|", "deact", "short", "wand"];
const toolbarTwo = ["port", "gnd", "vars", "books", "r17", "wire", "name", "|", "hier", "gear", "|", "fork", "|", "tree", "chart", "saveGraph"];

const Tools = ({ items }) =>
  items.map((id, i) =>
    id === "|" ? <ToolSep key={i} /> : <ToolButton key={i} type="button" aria-label={id}>{icons[id]}</ToolButton>
  );

/* palette drawings, 60 x 46 */
const Star = () => <path d="m1 1 6 6M7 1 1 7M4 0v8" stroke="#f4f060" strokeWidth="1.5" />;
const Ends = ({ y }) => <path d={`M8 ${y - 4}v8M52 ${y - 4}v8M8 ${y}h5M47 ${y}h5`} stroke="#d04040" strokeWidth="2" />;
const zig = "h6l3-4 3 9 4-10 4 10 4-10 4 10 3-5h8";
const coil = "M11 26h12v-4M14 22q-2-6 3-6t3 6zM23 26v-4q4-5 6 0v4m0-4q4-5 6 0v4m0-4q4-5 6 0v4h8";
const drawings = {
  R: <g><Star /><Ends y={25} /><path d={`M11 25${zig}`} stroke="#111" strokeWidth="2" /></g>,
  R_Model: <g><Star /><path d="M4 11h51v29H4z" stroke="#111" strokeWidth="2" /><path d={`M10 25${zig}`} stroke="#2020b0" strokeWidth="2" /></g>,
  L: <g><Ends y={26} /><path d={coil} stroke="#111" strokeWidth="2" /></g>,
  L_Model: <g><path d="M4 8h51v33H4z" stroke="#111" strokeWidth="2" /><path d={coil} stroke="#111" strokeWidth="2" /></g>,
  C: <g><Ends y={25} /><path d="M11 25h14M36 15v20M36 25h12M23 15q5 4 4 10t-4 10" stroke="#111" strokeWidth="2" /></g>,
  C_Model: <g><path d="M4 9h51v32H4z" stroke="#111" strokeWidth="2" /><path d="M10 25h16M36 15v20M36 25h14M23 15q5 4 4 10t-4 10" stroke="#2020b0" strokeWidth="2" /></g>,
  LR: <g><Star /><Ends y={25} /><path d="M13 40V14h34v26" stroke="#111" strokeWidth="2" /><path d="M16 27q3-8 7 0 4-8 7 0 4-8 7 0 4-8 7 0" stroke="#2020b0" strokeWidth="2" /></g>,
  CR: <g><Star /><Ends y={25} /><path d="M13 40V14h34v26" stroke="#111" strokeWidth="2" /><path d="M26 18v16M34 18v16M16 26h10M34 26h10" stroke="#2020b0" strokeWidth="2" /></g>,
  Xferp: <g><Star /><path d="M8 7v8M8 35v8M52 7v8M52 35v8" stroke="#d04040" strokeWidth="2" /><path d="M9 11h12q7 4 2 8 7 3 0 7 7 4 0 7-1 6-14 6M51 11H39q-7 4-2 8-7 3 0 7-7 4 0 7 1 6 14 6" stroke="#111" strokeWidth="2" /><path d="M16 18h.1M44 18h.1" stroke="#111" strokeWidth="4" strokeLinecap="round" /></g>,
  Xferuth: <g><Star /><path d="M8 9v8M8 35v8M52 9v8" stroke="#d04040" strokeWidth="2" /><path d="M9 12h19M29 7h16v9H29zM45 12h7M16 13v5q-6 2 0 5-6 2 0 5-6 2 0 5v5M22 13v11h26v14H44M29 33h15v9H29zM9 38h20" stroke="#111" strokeWidth="2" /></g>,
  Xfertap: <g><Star /><path d="M8 13v8M8 31v8M52 3v8M52 20v8M52 37v6" stroke="#d04040" strokeWidth="2" /><path d="M9 17h12q6 2 2 6 6 2 0 5 4 6-3 7H9M51 6H38q-6 2-2 5-6 2 0 5-5 5 3 7h12M36 26q-6 2 0 5-6 2 0 5-3 6 4 4h11" stroke="#111" strokeWidth="2" /><path d="M16 22h.1M43 13h.1M43 31h.1" stroke="#111" strokeWidth="4" strokeLinecap="round" /></g>,
};
const paletteItems = [
  ["R", "R"], ["R_Model", "R_Model"], ["L", "L"], ["L_Model", "L_Model"], ["C", "C"], ["C_Model", "C_Model"], ["LR", ""], ["CR", ""],
  ...Array.from({ length: 20 }, () => [null, ""]),
  ["Xferp", "Xferp"], ["Xferuth", "Xferuth"], ["Xfertap", "Xfertap"],
];

/* ---------- schematic ---------- */
const zigzag = "M2777 785V813l11 8-21 11 21 11-21 11 21 11-21 11 10 8V940";
const GoalBox = ({ x }) => (
  <g>
    <path d={`M${x + 6} 458h306v10h-306zM${x + 306} 412h10v56h-10z`} fill="#0008d0" />
    <rect x={x + 2} y="400" width="308" height="60" rx="2" fill="#eee9e8" stroke="#0008d0" strokeWidth="6" />
  </g>
);
const Schematic = () => (
  <CanvasDrawing aria-hidden="true">
    <defs>
      <pattern id="dots" width="38.4" height="38.4" patternUnits="userSpaceOnUse" x="261" y="341.5">
        <rect width="2.2" height="2.6" fill="#3c3838" />
      </pattern>
    </defs>
    <g transform="translate(-224 -320)" fill="none">
      <path d="M224 843h3300M1721 320v1700" stroke="#d0cccb" strokeWidth="2" />
      <GoalBox x={1642} />
      <GoalBox x={2064} />
      <path d="M1225 507h8v63H846v-8h379z" fill="#0008d0" />
      <path d="M839 497h386v65H839z" fill="#eee9e8" stroke="#0008d0" strokeWidth="4" />
      <path d="M919 497v65" stroke="#0008d0" strokeWidth="3" />
      <path d="M874 505h11v18h-11zM861 514h9v9h-9zM889 514h9v9h-9zM862 512q7-9 17-9t18 9M861 523q-8 6-7 14M898 523q8 6 7 14M871 523v6l-10 7M888 523v6l10 7" stroke="#0008d0" strokeWidth="3" />
      <path d="M857 537q7-7 14 0l4-9h9l4 9q7-7 14 0l4 12q-3 8-11 4l-3-6h-5v-5h-4v13h-7v-13h-4v5h-5l-3 6q-8 4-11-4z" fill="#0008d0" />
      <path d="M1336 689h138M2489 1074V787h288M2777 940v95" stroke="#ad3a78" strokeWidth="4" />
      <g stroke="#0004a8" strokeWidth="4">
        <path d="M1474 689h34M1510 671h77v38h-77zM1510 747h77v30h-77zM1761 747h77v30h-77zM2300 977h150v40h-150zM2300 1054h150v39h-150zM2450 1074h39" />
        <path d="m1472 694 8-10" strokeWidth="3" />
        <path d="M2750 806h56v113h-56z" />
        <path d={zigzag} />
        <path d="m2770 799 14-8M2777 1035v18M2757 1054h41M2760 1063h34M2764 1074h26" />
      </g>
      <path d="M2751 796h13M2757 789v14" stroke="#f06414" strokeWidth="4" />
      <path d="M2753 928h13" stroke="#111" strokeWidth="4" />
      <path d="M2773 781h8v9h-8zM2773 936h8v8h-8zM2773 1031h8v8h-8zM2485 1070h8v8h-8zM1470 685h7v8h-7z" fill="#4470d8" />
      <rect x="256" y="334" width="3300" height="1646" fill="url(#dots)" />
    </g>
  </CanvasDrawing>
);
const labels = [
  { x: 1674, y: 477, kind: "Goal", name: "OptimGoal1", params: ['Expr="dB(S11)"', 'SimInstanceName="SP1"', "Weight=1"] },
  { x: 2097, y: 477, kind: "Goal", name: "OptimGoal2", params: ['Expr="dB(S21)"', 'SimInstanceName="SP1"', "Weight=1"] },
  { x: 868, y: 578, kind: "S_Param", name: "SP1", params: [] },
  { x: 2820, y: 782, kind: "Term", name: "Term2", params: ["Num=2", "Z=50 Ohm"] },
  { x: 2365, y: 1101, kind: "MCFIL", name: "CLin5", params: ['Subst="MSub1"', "W=W1 mm", "S=S1 mm", "L=L1 mm"] },
  { x: 869, y: 1744, params: ["UpdateDataset=yes", "SaveNominal=no", "SaveAllIterations=no", "UseAllOptVars=yes", "UseAllGoals=yes"] },
];

/* ---------- cockpit data ---------- */
const variables = [
  { name: "L1", value: "9.02363", slide: 125, shape: "0 15,4 15,5 17,16 17,18 19,20 17,29 17,30 15,48 15,47 16,47 33,0 33" },
  { name: "L2", value: "8.66553", slide: 100, shape: "0 17,3 19,15 19,18 17,21 18,48 18,47 20,47 33,0 33" },
  { name: "L3", value: "8.71016", slide: 104, shape: "0 16,4 18,15 18,18 20,21 18,48 18,47 20,47 33,0 33" },
  { name: "S1", value: "0.160009", slide: 7, shape: "0 28,7 28,8 30,48 30,47 33,0 33" },
  { name: "S2", value: "1.03476", slide: 164, shape: "0 14,14 14,20 10,25 10,27 11,48 11,47 13,47 33,0 33" },
  { name: "S3", value: "0.747581", slide: 113, shape: "0 9,14 9,19 14,21 17,48 17,47 19,47 33,0 33" },
  { name: "W1", value: "1.1331", slide: 67, shape: "0 18,20 18,27 22,48 22,47 24,47 33,0 33" },
  { name: "W2", value: "0.861057", slide: 10, shape: "0 12,12 12,15 15,20 28,23 31,48 31,47 33,0 33" },
  { name: "W3", value: "1.79977", slide: 205, shape: "0 11,14 11,21 6,48 6,47 8,47 33,0 33" },
];

const ErrorBox = ({ h, path, edge }) => (
  <Block width="100%" height={h}>
    <rect width="100%" height="100%" fill="url(#gUp)" />
    <path d={path} stroke="#e8c010" strokeWidth="2" fill="none" />
    <path d={edge} stroke="#a82810" strokeWidth="3" fill="none" />
  </Block>
);
const Contribution = ({ h, red, fill = "rDeep" }) => (
  <Block width="38" height={h}>
    <rect width="38" height={h} fill="url(#gDown)" />
    <rect y={h - red} width="38" height={red} fill={`url(#${fill})`} />
    <rect y={h - red - 1} width="38" height="2" fill="#f0b830" />
  </Block>
);
const hatch = (x0, x1, yTop, yBot, back) => {
  let d = "";
  for (let x = x0; x + 30 <= x1 + 4; x += 18) d += back ? `M${x} ${yTop}L${x + 28} ${yBot}` : `M${x} ${yBot}L${x + 28} ${yTop}`;
  return d;
};
const thin = { vectorEffect: "non-scaling-stroke", fill: "none" };

const CloseSet = ({ gap, color }) => (
  <WinButtons $gap={gap} $color={color}>
    <WinButton type="button" aria-label="Minimize"><svg width="20" height="20"><path d="M0 11h20" stroke="currentColor" strokeWidth="2" /></svg></WinButton>
    <WinButton type="button" aria-label="Maximize"><svg width="20" height="20"><path d="M1 1h18v18H1z" stroke="currentColor" strokeWidth="2" fill="none" /></svg></WinButton>
    <WinButton type="button" aria-label="Close window"><svg width="20" height="20"><path d="m1 1 18 18M19 1 1 19" stroke="currentColor" strokeWidth="2" /></svg></WinButton>
  </WinButtons>
);

const SimWindow = () => (
  <FloatingWindow $x={14} $y={525} $w={1322}>
    <WindowTitle $color="#9a9a9a">
      <Glyph w={31} h={31}>
        <path d="M1 1h29v29H1z" fill="#dfe8f8" stroke="#3c8cc8" strokeWidth="2" />
        <path d="M1 1h29v6H1z" fill="#1c84c8" />
        <path d="M4 11h22M4 15h22M4 21h22M4 25h22" stroke="#5c48a0" strokeWidth="2" />
      </Glyph>
      <TitleText $size={23}>hpeesofsim 22:0</TitleText>
      <CloseSet gap={41} color="#909090" />
    </WindowTitle>
    <MenuBar $gap={23} $pad={11} $lift={3}>
      {["File", "Simulation", "Text", "Window"].map((m) => <MenuItem key={m} type="button">{m}</MenuItem>)}
    </MenuBar>
    <SimBody>
      <SimLabel>Simulation Messages</SimLabel>
      <Messages />
      <SimLabel>Status / Summary</SimLabel>
      <Summary>
        <Log>{`    W3 = 1.79977
    S2 = 1.03476
    L2 = 8.66553
    W2 = 861.057e-03
    S1 = 160.009e-03
    L1 = 9.02363
    W1 = 1.1331

SP Optim1[1].SP1[14] <CouplingLinesFilter_lib:BPF_optim:
,,,,,,,,,,,,
,,,,,,,,,,,,,,,,,,,,,,,,,,,`}</Log>
        <LogScroll>
          <ScrollButton type="button" aria-label="Scroll left"><Tri dir="left" /></ScrollButton>
        </LogScroll>
      </Summary>
      <SimStatus>{"Optim1[14]  SP1[1183/3001] freq=4.788 GHz"}</SimStatus>
    </SimBody>
  </FloatingWindow>
);

const Cockpit = () => (
  <FloatingWindow $x={866} $y={640} $w={1519}>
    <WindowTitle $color="#1a1a1a">
      <Tree w={31} h={31} />
      <TitleText $size={23}>Optimization Cockpit</TitleText>
      <CloseSet gap={41} color="#111" />
    </WindowTitle>
    <CockpitBody>
      <Side>
        <Stack>
          <PushButton type="button" $h={48}>
            <svg width="14" height="24" aria-hidden="true"><path d="M0 0 14 12 0 24z" fill="#34a420" /></svg>
            Continue
          </PushButton>
          <PushButton type="button">Simulate</PushButton>
        </Stack>
        <PushButton type="button">Update Design...</PushButton>
        <Group $pad="18px 18px">
          <GroupTitle $x={-4}>States</GroupTitle>
          <Stack>
            <PushButton type="button">Store...</PushButton>
            <PushButton type="button">Recall...</PushButton>
            <PushButton type="button">Revert</PushButton>
          </Stack>
        </Group>
        <PushButton type="button">Options...</PushButton>
        <Stack $end>
          <PushButton type="button">Close</PushButton>
          <PushButton type="button">Help</PushButton>
        </Stack>
      </Side>
      <Panes>
        <Group $pad="0 5px 8px 33px">
          <GroupTitle $big $x={-25}>Status</GroupTitle>
          <StatusRow>
            <Tree w={41} h={41} pause />
            <AlgoText>Optim1<br />Gradient</AlgoText>
            <ProgressBlock>
              <ProgressText><span>Iteration 14/100</span><span>Elapsed time:51s</span></ProgressText>
              <ProgressTrack role="progressbar" aria-label="Iterations" aria-valuenow={14} aria-valuemax={100}>
                <Chunk /><Chunk /><Chunk />
              </ProgressTrack>
            </ProgressBlock>
            <Push><PushButton type="button" $w={209}>Edit algorithm...</PushButton></Push>
          </StatusRow>
        </Group>
        <Columns>
          <Group $pad="1px 6px 11px 10px">
            <GroupTitle $big $x={-2}>Variables</GroupTitle>
            <Row>
              <Grow>9 variables</Grow>
              <TuneSplit>
                <PushButton type="button" $w={169} $h={34}>Start Tuning</PushButton>
                <TuneArrow type="button" aria-label="Tuning options"><Tri s={18} /></TuneArrow>
              </TuneSplit>
              <PushButton type="button" $w={209}>Edit variables...</PushButton>
            </Row>
            <Sliders>
              {variables.map((v) => (
                <Slider key={v.name} type="range" min="0" max="247" defaultValue={v.slide} aria-label={v.name} />
              ))}
            </Sliders>
            <VarPanel>
              <VarTable>
                <tbody>
                  {variables.map((v) => (
                    <tr key={v.name}>
                      <VarName scope="row">{v.name}</VarName>
                      <VarValue>{v.value}</VarValue>
                      <VarChart>
                        <Block width="329" height="33">
                          <rect width="329" height="33" fill="url(#sky)" />
                          <polygon points={v.shape} fill="url(#bar)" />
                        </Block>
                      </VarChart>
                    </tr>
                  ))}
                </tbody>
              </VarTable>
              <VScroll>
                <ScrollButton type="button" aria-label="Scroll up"><Tri dir="up" /></ScrollButton>
                <VThumb />
                <ScrollButton type="button" aria-label="Scroll down"><Tri /></ScrollButton>
              </VScroll>
            </VarPanel>
          </Group>
          <Group $pad="8px 6px 10px 9px">
            <GroupTitle $big $x={-1}>Goals</GroupTitle>
            <GoalHead>
              <GoalCount>2 goals</GoalCount>
              <span>Error:</span>
              <span>0.00460993</span>
              <Push><PushButton type="button" $w={165}>Edit goals...</PushButton></Push>
            </GoalHead>
            <GoalCharts>
              <div>
                <Caption>Error history</Caption>
                <ErrorBox h={85} path="M1 0V22M5 22V82H44" edge="M1 22V84H44M3 62V84" />
              </div>
              <div>
                <Caption>Goal contributions</Caption>
                <Bars><Contribution h={85} red={2} /><Contribution h={85} red={84} fill="rDown" /></Bars>
              </div>
            </GoalCharts>
            <GoalPanel>
              <Group $pad="18px 16px 17px 19px">
                <GroupTitle $x={-5}>OptimGoal1 = dB(S11)</GroupTitle>
                <GoalRow $side={90}>
                  <Plot viewBox="0 0 794 437" preserveAspectRatio="none" aria-hidden="true">
                    <path d={hatch(298, 500, 104, 140)} stroke="#c86050" strokeWidth="1.4" {...thin} />
                    <path d="M300 144H490" stroke="#e01c10" strokeWidth="3" {...thin} />
                    <path d="M185 40Q205 45 212 75L222 130 228 220 233 280 240 225 247 200 256 215 262 270 268 340 274 270 280 200 290 152 315 148 325 190 337 280 345 240 355 180 365 135 380 127 392 145 402 235 408 150 415 90Q425 45 450 39H590" stroke="#201090" strokeWidth="2" strokeDasharray="7 5" {...thin} />
                    <path d="M10 36H200L240 40Q262 45 272 75 282 110 287 150L295 250 301 340 306 285 316 268 325 300 335 400 345 300 355 210Q370 178 383 175 398 178 408 215L420 290 428 380 436 290 445 230Q455 200 463 200 472 202 478 240L485 308 493 250 500 150Q508 90 525 60 540 40 590 36H780" stroke="#0808b8" strokeWidth="4" {...thin} />
                  </Plot>
                  <div>
                    <Caption>Error</Caption>
                    <ErrorBox h={45} path="M1 0V42H14" edge="M0 44H14" />
                  </div>
                </GoalRow>
              </Group>
              <Group $pad="18px 16px 17px 19px">
                <GroupTitle $x={-5}>OptimGoal2 = dB(S21)</GroupTitle>
                <GoalRow $side={146}>
                  <Plot viewBox="0 0 653 435" preserveAspectRatio="none" aria-hidden="true">
                    <path d={hatch(14, 170, 158, 195) + hatch(488, 634, 158, 195) + hatch(246, 405, 43, 82, true)} stroke="#c86050" strokeWidth="1.4" {...thin} />
                    <path d="M14 199H165M478 199H632M245 42H400" stroke="#e01c10" strokeWidth="3" {...thin} />
                    <path d="M60 345C110 270 140 190 150 140 165 80 170 38 190 37H330C345 45 350 70 360 110 385 200 440 320 630 392" stroke="#201090" strokeWidth="2" strokeDasharray="7 4" {...thin} />
                    <path d="M12 398C60 350 120 290 165 205 195 145 215 70 238 36H400L410 42C425 60 440 90 480 160 530 235 570 275 640 312" stroke="#0808b8" strokeWidth="4" {...thin} />
                  </Plot>
                  <GoalSide>
                    <div>
                      <Caption>Error</Caption>
                      <ErrorBox h={32} path="M1 0V14M3 14V28H22" edge="M1 14V31H22" />
                    </div>
                    <div>
                      <Caption>Contributions</Caption>
                      <Bars>
                        <Contribution h={61} red={37} />
                        <Contribution h={61} red={21} />
                        <Contribution h={61} red={2} />
                      </Bars>
                    </div>
                  </GoalSide>
                </GoalRow>
              </Group>
            </GoalPanel>
          </Group>
        </Columns>
      </Panes>
    </CockpitBody>
  </FloatingWindow>
);

const mainMenu = ["File", "Edit", "Select", "View", "Insert", "Options", "Tools", "Layout", "Simulate", "Window", "DynamicLink", "DesignGuide", "Help"];

export default function App() {
  return (
    <Page>
      <Global />
      <Defs />
      <AppWindow>
        <MainTitle>
          <Glyph w={30} h={30}>
            <path d="M1 1h28v28H1z" fill="#f0f4ff" stroke="#5c9cd0" strokeWidth="2" />
            <path d="M1 10h9M10 5v10M17 5v10M17 10h12M2 23h5l3-5 4 9 4-9 3 9 3-4h3V10" stroke="#5c2c98" strokeWidth="2" />
          </Glyph>
          <TitleText $size={23}>BPF_optim [CouplingLinesFilter_lib:BPF_optim:schematic] (Schematic):6</TitleText>
          <svg width="96" height="20" aria-hidden="true"><path d="M1 10h20M91 2h5M91 1v18h5" stroke="#8a8a8a" strokeWidth="2" fill="none" /></svg>
        </MainTitle>
        <MenuBar $gap={25} $pad={12} $lift={1}>
          {mainMenu.map((m) => <MenuItem key={m} type="button">{m}</MenuItem>)}
        </MenuBar>
        <Toolbar $h={64}>
          <Grip $after={5} />
          <Tools items={toolbarOne} />
        </Toolbar>
        <Toolbar $h={62}>
          <Grip $after={8} />
          <Combo $w={337} $after={5}>
            <ComboSelect aria-label="Palette group" defaultValue="Lumped-Components"><option>Lumped-Components</option></ComboSelect>
            <ComboArrow><Tri /></ComboArrow>
          </Combo>
          <Combo $w={259} $after={2}>
            <ComboSelect aria-label="Component" defaultValue=""><option value=""></option></ComboSelect>
            <ComboArrow><Tri /></ComboArrow>
          </Combo>
          <Tools items={toolbarTwo} />
        </Toolbar>
        <Main>
          <PaletteDock>
            <PaletteHead>
              <PaletteName>Palette</PaletteName>
              <TinyButton type="button" aria-label="Float palette">
                <Glyph w={16} h={20}><path d="M5 7V2h10v9h-4M5 3h10M1 8h10v10H1zM1 9h10" stroke="#000" strokeWidth="2" /></Glyph>
              </TinyButton>
              <TinyButton type="button" aria-label="Close palette">
                <Glyph w={16} h={20}><path d="m1 3 14 14M15 3 1 17" stroke="#000" strokeWidth="2.5" /></Glyph>
              </TinyButton>
            </PaletteHead>
            <PaletteBody>
              <PaletteGrid>
                {paletteItems.map(([art, text], i) => (
                  <PaletteButton key={i} type="button" aria-label={text || "Component"}>
                    {art && <Glyph w={60} h={46} box="0 0 60 46">{drawings[art]}</Glyph>}
                    <span>{text || "\u00a0"}</span>
                  </PaletteButton>
                ))}
              </PaletteGrid>
            </PaletteBody>
          </PaletteDock>
          <CanvasColumn>
            <Canvas>
              <Schematic />
              <Label $x={949} $y={511} $size={30} $color="#222">S-PARAMETERS</Label>
              <Label $x={1753} $y={414} $size={29} $color="#222">GOAL</Label>
              <Label $x={2176} $y={414} $size={29} $color="#222">GOAL</Label>
              {labels.map((l) => (
                <Label key={`${l.x}-${l.y}`} $x={l.x} $y={l.y}>
                  {l.kind && <Kind>{l.kind}</Kind>}
                  {l.name && <Name>{l.name}</Name>}
                  {l.params.map((p) => <div key={p}>{p}</div>)}
                </Label>
              ))}
            </Canvas>
            <HScroll>
              <ScrollButton type="button" $w={32} $h={32} aria-label="Scroll canvas left"><Tri dir="left" /></ScrollButton>
              <HTrack><HThumb /></HTrack>
            </HScroll>
          </CanvasColumn>
        </Main>
        <StatusBar>
          <StatusCell>Select: Enter the starting point</StatusCell>
          <StatusCell $w={213}>0 items</StatusCell>
          <StatusCell $w={224} $color="#2424a0">ads_device:drawing</StatusCell>
          <StatusCell $w={335}>4.500, 0.000</StatusCell>
        </StatusBar>
        <Bird>
          <svg width="96" height="108" viewBox="0 0 96 108" role="img" aria-label="Bird">
            <path d="M48 2 92 28q2 2 2 5v42q0 3-2 5L48 106 4 80q-2-2-2-5V33q0-3 2-5z" fill="url(#bird)" stroke="#86b4ff" strokeWidth="3" />
            <path d="M48 6 89 30v48L48 102 7 78V30z" fill="none" stroke="#3a6cc8" strokeWidth="1.5" />
            <path d="M12 32q14-2 19 4 6 8 9 8 10-14 39-22-2 22-15 32l18 10q-12 8-27 6l8 28Q28 84 27 58q1-16-15-26z" fill="#eef5ff" />
          </svg>
        </Bird>
        <SimWindow />
        <Cockpit />
        <ClickHalo />
        <Pointer width="24" height="38" viewBox="0 0 26 40" aria-hidden="true">
          <path d="M2 2v30l7-6 5 12 6-3-5-11h9z" fill="#fff" stroke="#222" strokeWidth="2" />
        </Pointer>
        <ImeBar>
          <svg width="254" height="46" role="img" aria-label="Input method">
            <path d="M38 8h216v38H38z" fill="#fdfdfd" />
            <path d="M2 10 41 1l11 40q0 4-4 5H8z" fill="#f06428" />
            <path d="M40 17q-18-8-25 0-2 8 13 9 12 2 8 9-8 8-24 1" fill="none" stroke="#fff" strokeWidth="7" />
            <text x="79" y="38" textAnchor="middle" fontFamily="Noto Sans CJK SC" fontWeight="bold" fontSize="27" fill="#1c74c8">中</text>
            <circle cx="113" cy="20" r="4" fill="none" stroke="#1c74c8" strokeWidth="2" />
            <path d="M124 29q5-1 4 5-1 6-6 8 3-5 1-7-2-4 1-6z" fill="#1c74c8" />
            <circle cx="160" cy="29" r="13" fill="none" stroke="#1c74c8" strokeWidth="3" />
            <path d="M155 22v6M165 22v6M152 32q8 8 16 0" fill="none" stroke="#1c74c8" strokeWidth="3" />
            <rect x="196" y="14" width="11" height="19" rx="5" fill="#1c74c8" />
            <path d="M192 26q0 11 9 11t10-11M201 37v6M195 43h13" fill="none" stroke="#1c74c8" strokeWidth="3" />
            <rect x="229" y="18" width="34" height="24" rx="3" fill="none" stroke="#1c74c8" strokeWidth="3" />
            <path d="M233 25h21M233 31h21M237 37h17" stroke="#1c74c8" strokeWidth="3" strokeDasharray="4 2" />
          </svg>
        </ImeBar>
      </AppWindow>
    </Page>
  );
}
